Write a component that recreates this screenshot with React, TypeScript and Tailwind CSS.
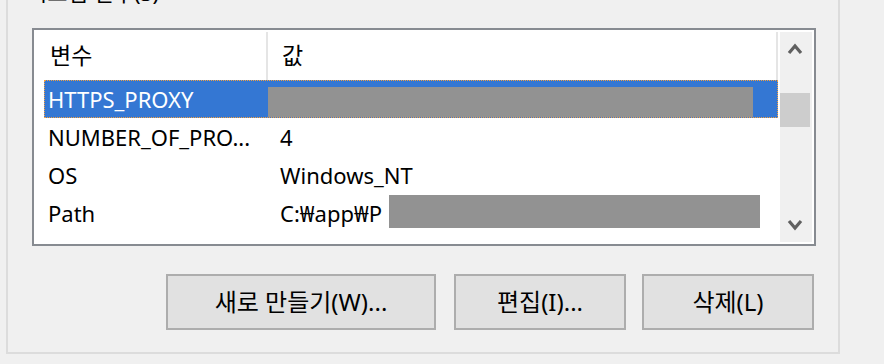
import React from "react";

type Row = {
  name: string;
  value?: string;
  redact?: "full" | "tail";
  selected?: boolean;
};

const rows: Row[] = [
  { name: "HTTPS_PROXY", redact: "full", selected: true },
  { name: "NUMBER_OF_PRO...", value: "4" },
  { name: "OS", value: "Windows_NT" },
  { name: "Path", value: "C:₩app₩P", redact: "tail" },
];

const Chevron = ({ up }: { up?: boolean }) => (
  <svg width="16" height="12" viewBox="0 0 16 12" className="block">
    <polyline
      points={up ? "2,10 8,3 14,10" : "2,2 8,9 14,2"}
      fill="none"
      stroke="#606060"
      strokeWidth="3.2"
    />
  </svg>
);

const ListRow = ({ row }: { row: Row }) => {
  const sel = row.selected;
  return (
    <div
      className={`h-[38px] flex border ${
        sel
          ? "bg-[#3477d3] border-dotted border-[#f5a040] text-white"
          : "border-transparent text-black"
      }`}
    >
      <div className="w-[223px] pl-[3px] flex items-center whitespace-nowrap overflow-hidden">
        {row.name}
      </div>
      {row.redact === "full" ? (
        <div className="w-[485px] h-[30px] self-end bg-[#929292]" />
      ) : row.redact === "tail" ? (
        <>
          <div className="w-[121px] pl-[12px] flex items-center whitespace-nowrap overflow-hidden">
            {row.value}
          </div>
          <div className="w-[371px] h-[33px] bg-[#929292]" />
        </>
      ) : (
        <div className="pl-[12px] flex items-center whitespace-nowrap">
          {row.value}
        </div>
      )}
    </div>
  );
};

const Button = ({ label, w, ml }: { label: string; w: string; ml?: string }) => (
  <button
    className={`${w} ${ml ?? ""} h-[56px] bg-[#e1e1e1] border-2 border-[#adadad] text-black text-[24px] flex items-center justify-center whitespace-nowrap`}
  >
    {label}
  </button>
);

export default function App() {
  return (
    <div className="w-[884px] h-[364px] overflow-hidden bg-[#f0f0f0] text-black text-[22px] font-['Noto_Sans','Noto_Sans_CJK_KR',sans-serif]">
      <div className="ml-[6px] w-[834px] h-[354px] border-x-2 border-b-2 border-[#dcdcdc] flex flex-col">
        <div className="h-[28px] -mt-[22px] pl-[19px] leading-[28px] whitespace-nowrap">
          시스템 변수(S)
        </div>

        <div className="mt-[22px] ml-[24px] mr-[22px] h-[218px] border-2 border-[#878b91] bg-white flex">
          <div className="flex-1 flex flex-col">
            <div className="h-[50px] flex">
              <div className="w-[232px] pl-[16px] flex items-center text-[23px]">변수</div>
              <div className="w-[2px] mt-[2px] bg-[#e5e5e5]" />
              <div className="flex-1 pl-[14px] flex items-center text-[23px]">값</div>
              <div className="w-[2px] mt-[2px] bg-[#e5e5e5]" />
            </div>
            <div className="ml-[10px] flex flex-col">
              {rows.map((r) => (
                <ListRow key={r.name} row={r} />
              ))}
            </div>
          </div>

          <div className="px-[2px] py-[2px]">
            <div className="w-[32px] h-full bg-[#f0f0f0] flex flex-col">
              <div className="w-[30px] h-[34px] flex items-center justify-center">
                <Chevron up />
              </div>
              <div className="flex-1 pt-[27px]">
                <div className="w-[30px] h-[34px] bg-[#cdcdcd]" />
              </div>
              <div className="w-[30px] h-[34px] flex items-center justify-center">
                <Chevron />
              </div>
            </div>
          </div>
        </div>

        <div className="mt-[28px] flex justify-end pr-[24px]">
          <Button label="새로 만들기(W)..." w="w-[270px]" />
          <Button label="편집(I)..." w="w-[172px]" ml="ml-[18px]" />
          <Button label="삭제(L)" w="w-[172px]" ml="ml-[16px]" />
        </div>
      </div>
    </div>
  );
}
